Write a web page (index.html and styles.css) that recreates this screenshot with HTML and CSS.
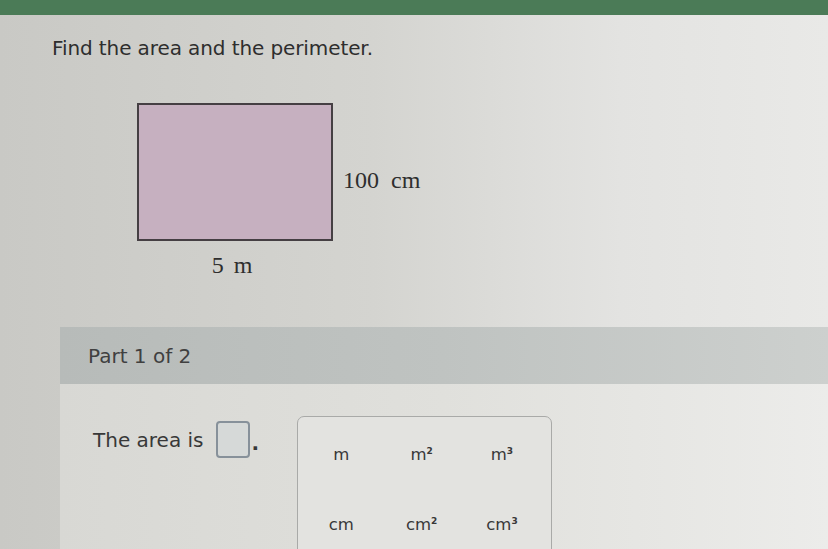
FILE: index.html
```html
<!DOCTYPE html>
<html>
<head>
<meta charset="utf-8">
<link rel="stylesheet" href="styles.css">
</head>
<body>
<div class="topbar"></div>
<main class="page">
  <h1 class="question">Find the area and the perimeter.</h1>
  <div class="figure">
    <div class="rect"></div>
    <div class="side-label">100 cm</div>
    <div class="bottom-label">5 m</div>
  </div>
  <section class="part">
    <div class="part-header">Part 1 of 2</div>
    <div class="part-body">
      <div class="answer">
        <span class="answer-text">The area is</span>
        <span class="input-box"></span>
        <span class="period">.</span>
      </div>
      <div class="units">
        <span class="unit">m</span>
        <span class="unit">m<sup>2</sup></span>
        <span class="unit">m<sup>3</sup></span>
        <span class="unit">cm</span>
        <span class="unit">cm<sup>2</sup></span>
        <span class="unit">cm<sup>3</sup></span>
      </div>
    </div>
  </section>
</main>
</body>
</html>
```
FILE: styles.css
```css
html, body {
  margin: 0;
  padding: 0;
  height: 100%;
  overflow: hidden;
}
body {
  background: linear-gradient(90deg, #c9c9c5 0%, #d4d4d0 45%, #e3e3e1 75%, #e9e9e7 100%);
  font-family: "DejaVu Sans", "Open Sans", sans-serif;
  color: #3a3a3a;
}
.topbar {
  height: 15px;
  background: #4b7b57;
}
.page {
  display: flex;
  flex-direction: column;
}
.question {
  margin: 20px 0 0 52px;
  font-size: 20px;
  font-weight: 400;
  line-height: 26px;
  color: #2e2e2e;
  letter-spacing: -0.1px;
}
.figure {
  display: grid;
  grid-template-columns: 196px auto;
  grid-template-rows: 138px auto;
  column-gap: 10px;
  margin: 42px 0 0 137px;
}
.rect {
  box-sizing: border-box;
  background: #c6b0c0;
  border: 2.5px solid #453f43;
}
.side-label {
  align-self: center;
  font-family: "Liberation Serif", "Times New Roman", serif;
  font-size: 24px;
  color: #2e2e2e;
  word-spacing: 6px;
  padding-top: 16px;
}
.bottom-label {
  justify-self: center;
  font-family: "Liberation Serif", "Times New Roman", serif;
  font-size: 24px;
  color: #2e2e2e;
  margin-top: 11px;
  word-spacing: 4px;
  margin-right: 6px;
}
.part {
  margin: 48px 0 0 60px;
}
.part-header {
  height: 57px;
  box-sizing: border-box;
  padding: 17px 0 0 28px;
  background: linear-gradient(90deg, #b7bbb9 0%, #bfc3c1 50%, #cdd0ce 100%);
  font-size: 20px;
  color: #404040;
}
.part-body {
  display: flex;
  align-items: flex-start;
  padding: 32px 0 0 33px;
  background: linear-gradient(90deg, #d8d8d4 0%, #e0e0dc 50%, #ececea 100%);
  height: 200px;
}
.answer {
  display: flex;
  align-items: center;
  margin-top: 5px;
  font-size: 20px;
  color: #383838;
}
.input-box {
  width: 30px;
  height: 33px;
  margin-left: 12px;
  border: 2px solid #87919a;
  border-radius: 4px;
  background: #d6d9d8;
}
.period {
  margin-left: 2px;
  margin-top: 6px;
  font-weight: 700;
}
.units {
  margin-left: 38px;
  width: 255px;
  height: 160px;
  box-sizing: border-box;
  border: 1px solid #a9aaa8;
  border-radius: 7px;
  background: #e3e3e0;
  display: grid;
  grid-template-columns: repeat(3, 1fr);
  grid-auto-rows: 70px;
  padding: 2px 9px 0 3px;
  justify-items: center;
  align-items: center;
}
.unit {
  font-size: 16.5px;
  color: #383838;
}
.unit sup {
  font-size: 9px;
  font-weight: 700;
}
```
